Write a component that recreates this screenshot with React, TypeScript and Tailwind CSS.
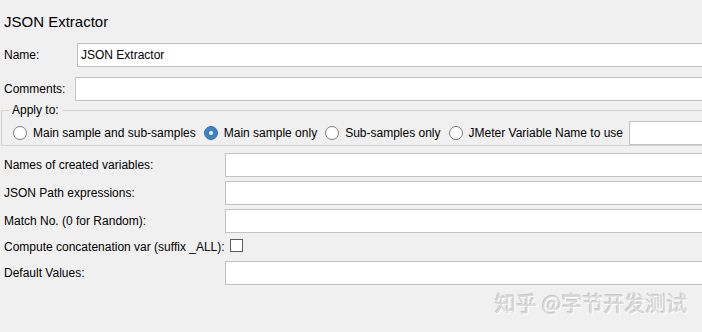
import React from "react";

const inputBox = "h-[24px] bg-white border border-[#c2c2c2] border-r-0 flex items-center px-[2px]";

function Radio({ checked }: { checked?: boolean }) {
  if (checked) {
    return (
      <span className="w-[14px] h-[14px] rounded-full bg-[#3f81c3] border border-[#3575b5] flex items-center justify-center shrink-0">
        <span className="w-[4px] h-[4px] rounded-full bg-white" />
      </span>
    );
  }
  return <span className="w-[14px] h-[14px] rounded-full bg-white border border-[#7a7a7a] shrink-0" />;
}

function RadioOption({ label, checked }: { label: string; checked?: boolean }) {
  return (
    <label className="flex items-center gap-[6px] whitespace-nowrap">
      <Radio checked={checked} />
      <span>{label}</span>
    </label>
  );
}

export default function App() {
  return (
    <div className="relative w-[702px] h-[332px] overflow-hidden bg-[#f0f0f0] text-[12px] leading-[14px] text-black font-['Liberation_Sans',Arial,sans-serif]">
      <div className="h-[43px] pt-[13px] pl-[4px] text-[15px] leading-[18px]">JSON Extractor</div>

      <div className="flex items-center">
        <div className="w-[77px] pl-[4px]">Name:</div>
        <div className={`flex-1 ${inputBox}`}>
          <span className="pl-[1px]">JSON Extractor</span>
        </div>
      </div>

      <div className="flex items-center mt-[10px]">
        <div className="w-[75px] pl-[4px]">Comments:</div>
        <div className={`flex-1 ${inputBox}`} />
      </div>

      <fieldset className="mt-[2px] ml-[1px] border border-[#d3d3d3] border-r-0 pb-0">
        <legend className="ml-[7px] px-[3px]">Apply to:</legend>
        <div className="flex items-center pt-[4px] pl-[11px]">
          <div className="flex items-center gap-[8px]">
            <RadioOption label="Main sample and sub-samples" />
            <RadioOption label="Main sample only" checked />
            <RadioOption label="Sub-samples only" />
            <RadioOption label="JMeter Variable Name to use" />
          </div>
          <div className={`ml-[6px] flex-1 min-w-[80px] ${inputBox}`} />
        </div>
      </fieldset>

      <div className="grid grid-cols-[225px_1fr] gap-y-[4px] mt-[7px] whitespace-nowrap">
        <div className="pl-[4px] self-center">Names of created variables:</div>
        <div className={inputBox} />
        <div className="pl-[4px] self-center">JSON Path expressions:</div>
        <div className={inputBox} />
        <div className="pl-[4px] self-center">Match No. (0 for Random):</div>
        <div className={inputBox} />
        <div className="pl-[4px] h-[20px] flex items-center">Compute concatenation var (suffix _ALL):</div>
        <div className="h-[20px] flex items-start pt-[2px] pl-[5px]">
          <span className="w-[13px] h-[13px] bg-white border border-[#5a5a5a]" />
        </div>
        <div className="pl-[4px] self-center">Default Values:</div>
        <div className={inputBox} />
      </div>

      <div className="absolute left-[495px] top-[290px] text-[21px] leading-[24px] text-[#d9d9d9] [text-shadow:1px_1px_0_#ffffff,-1px_-1px_0_#c8c8c8] font-['Noto_Sans_CJK_SC','Noto_Sans',sans-serif] whitespace-nowrap">
        知乎 @字节开发测试
      </div>
    </div>
  );
}
